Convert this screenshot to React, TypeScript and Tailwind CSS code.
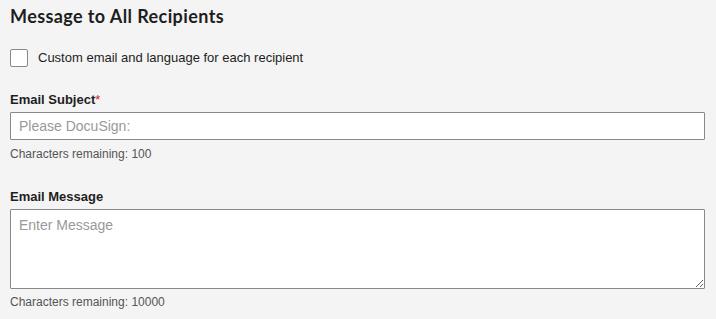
export default function App() {
  return (
    <div className="min-h-[319px] w-[716px] bg-[#f4f4f4] pl-[10px] pr-[11px] pt-[5px] font-['Liberation_Sans',Arial,sans-serif] text-[#1e1e1e]">
      <h2 className="font-['Lato',sans-serif] text-[18px] font-bold leading-[22px] tracking-[0.4px] text-[#1e1e1e]">
        Message to All Recipients
      </h2>

      <label className="mt-[22px] flex items-center gap-[10px]">
        <span className="h-[18px] w-[18px] rounded-[2px] border border-[#888] bg-white" />
        <span className="text-[13px] leading-[18px] text-[#1e1e1e]">
          Custom email and language for each recipient
        </span>
      </label>

      <div className="mt-[24px]">
        <div className="text-[13px] font-bold leading-[18px]">
          Email Subject<span className="font-normal text-[#c9252c]">*</span>
        </div>
        <input
          className="mt-[3px] block h-[28px] w-full rounded-[1px] border border-[#888] bg-white px-[8px] text-[14px] outline-none placeholder:text-[#999]"
          placeholder="Please DocuSign:"
        />
        <div className="mt-[6px] text-[12px] leading-[16px] text-[#555]">Characters remaining: 100</div>
      </div>

      <div className="mt-[26px]">
        <div className="text-[13px] font-bold leading-[18px]">Email Message</div>
        <textarea
          className="mt-[3px] block h-[80px] w-full rounded-[1px] border border-[#888] bg-white px-[8px] py-[6px] text-[14px] leading-[18px] outline-none placeholder:text-[#999]"
          placeholder="Enter Message"
        />
        <div className="mt-[5px] text-[12px] leading-[16px] text-[#555]">Characters remaining: 10000</div>
      </div>
    </div>
  );
}
